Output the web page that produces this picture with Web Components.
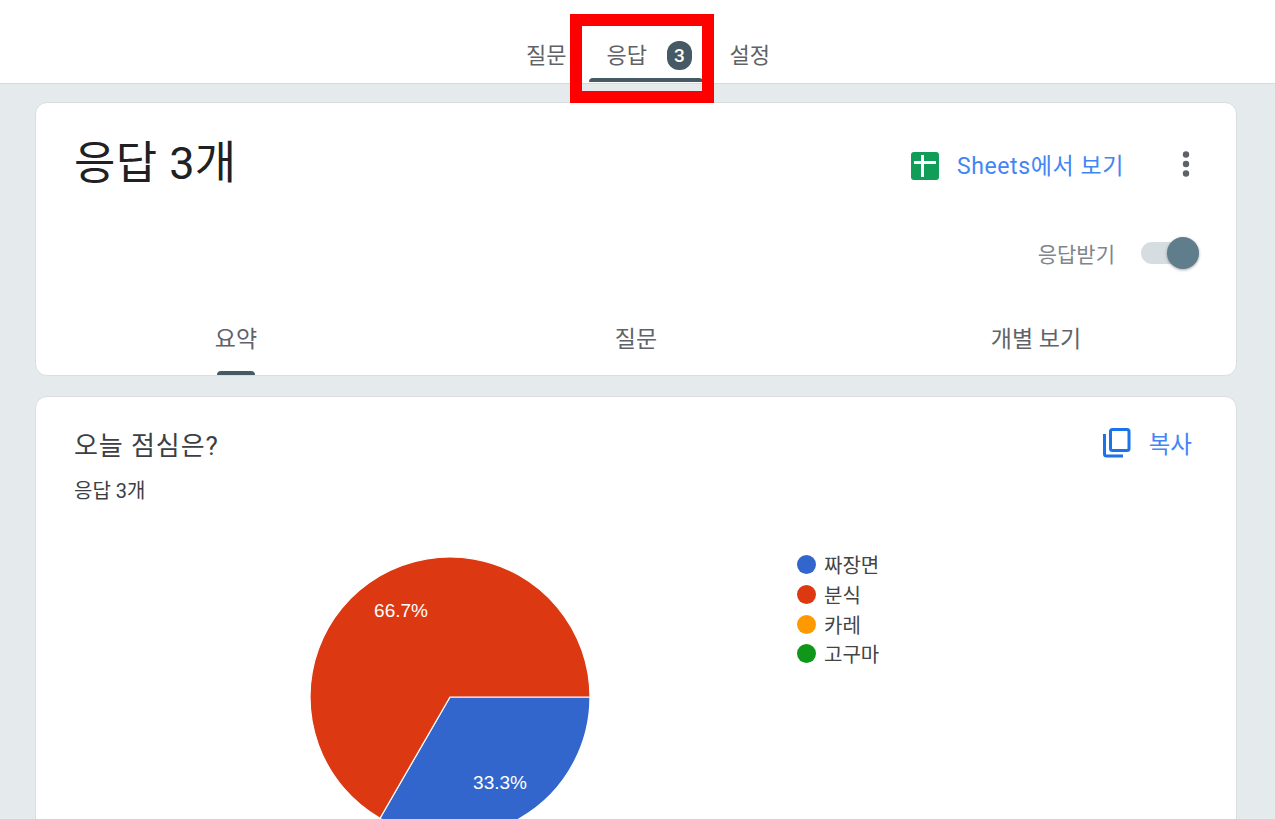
<!DOCTYPE html>
<html lang="ko">
<head>
<meta charset="utf-8">
<title>응답</title>
<style>
html, body { margin: 0; height: 100%; overflow: hidden; }
body {
    background: #e5eaed;
    font-family: Roboto, "Noto Sans CJK KR", sans-serif;
}
</style>
</head>
<body>
<top-bar></top-bar>
<page-body>
    <summary-card></summary-card>
    <question-card title-text="오늘 점심은?" count-text="응답 3개"></question-card>
</page-body>

<script>
class TopTab extends HTMLElement {
    constructor() {
        super();
        this.attachShadow({ mode: "open" });
        this.shadowRoot.innerHTML = `
<style>
:host{
    display: flex;
    align-items: center;
    flex: none;
    position: relative;
    height: 83px;
    box-sizing: border-box;
    padding-top: 22px;
    color: #5f6368;
    font-size: 22px;
}
:host([active]){
    width: 114px;
    padding-left: 17px;
    gap: 20px;
}
:host([active])::after{
    content: "";
    position: absolute;
    left: 0;
    right: 0;
    bottom: 1px;
    height: 4px;
    border-radius: 4px 4px 0 0;
    background: #455a64;
}
</style>
<slot></slot>`;
    }
}

class CountBadge extends HTMLElement {
    constructor() {
        super();
        this.attachShadow({ mode: "open" });
        this.shadowRoot.innerHTML = `
<style>
:host{
    display: flex;
    align-items: center;
    justify-content: center;
    width: 25px;
    height: 29px;
    margin-top: 6px;
    border-radius: 12px;
    background: #455a64;
    color: #fff;
    font-size: 19px;
    font-weight: 500;
}
</style>
<slot></slot>`;
    }
}

class TopBar extends HTMLElement {
    constructor() {
        super();
        this.attachShadow({ mode: "open" });
        this.shadowRoot.innerHTML = `
<style>
:host{
    display: flex;
    position: relative;
    height: 84px;
    box-sizing: border-box;
    padding-left: 526px;
    background: #fff;
    border-bottom: 1px solid #d6dadd;
}
top-tab:nth-of-type(1){ margin-right: 23px; }
top-tab:nth-of-type(3){ margin-left: 26px; }
.mark{
    position: absolute;
    left: 570px;
    top: 14px;
    width: 144px;
    height: 89px;
    box-sizing: border-box;
    border: 12px solid #ff0000;
    z-index: 5;
}
</style>
<top-tab>질문</top-tab>
<top-tab active><span>응답</span><count-badge>3</count-badge></top-tab>
<top-tab>설정</top-tab>
<div class="mark"></div>`;
    }
}

class PageBody extends HTMLElement {
    constructor() {
        super();
        this.attachShadow({ mode: "open" });
        this.shadowRoot.innerHTML = `
<style>
:host{
    display: flex;
    flex-direction: column;
    gap: 20px;
    width: 1202px;
    margin-left: 35px;
    padding-top: 18px;
}
</style>
<slot></slot>`;
    }
}

class SwitchToggle extends HTMLElement {
    constructor() {
        super();
        this.attachShadow({ mode: "open" });
        this.shadowRoot.innerHTML = `
<style>
:host{
    display: block;
    position: relative;
    width: 58px;
    height: 32px;
}
.track{
    position: absolute;
    left: 0;
    right: 3px;
    top: 5px;
    height: 22px;
    border-radius: 11px;
    background: #d5dde1;
}
.thumb{
    position: absolute;
    right: 0;
    top: 0;
    width: 32px;
    height: 32px;
    border-radius: 50%;
    background: #607d8b;
    box-shadow: 0 1px 3px rgba(0,0,0,.35);
}
</style>
<div class="track"></div>
<div class="thumb"></div>`;
    }
}

class SummaryTab extends HTMLElement {
    constructor() {
        super();
        this.attachShadow({ mode: "open" });
        this.shadowRoot.innerHTML = `
<style>
:host{
    display: flex;
    justify-content: center;
    position: relative;
    height: 73px;
    color: #5f6368;
    font-size: 23px;
    line-height: 73px;
}
:host([active])::after{
    content: "";
    position: absolute;
    left: 50%;
    bottom: 0;
    width: 38px;
    margin-left: -19px;
    height: 5px;
    border-radius: 4px 4px 0 0;
    background: #455a64;
}
</style>
<slot></slot>`;
    }
}

class SummaryCard extends HTMLElement {
    constructor() {
        super();
        this.attachShadow({ mode: "open" });
        this.shadowRoot.innerHTML = `
<style>
:host{
    display: block;
    height: 274px;
    box-sizing: border-box;
    background: #fff;
    border: 1px solid #dadce0;
    border-radius: 12px;
    overflow: hidden;
}
.head{
    display: flex;
    align-items: center;
    height: 120px;
    padding: 0 38px;
}
h1{
    flex: 1;
    margin: 2px 0 0;
    font-size: 45px;
    letter-spacing: .4px;
    font-weight: 400;
    color: #202124;
    line-height: 116px;
}
.sheets{
    display: flex;
    align-items: center;
    gap: 18px;
    margin-top: 5px;
    color: #4285f4;
    font-size: 23px;
    letter-spacing: .6px;
}
.sheets span{ margin-bottom: 4px; }
.more{
    margin: 2px 8px 0 58px;
    display: block;
}
.accept{
    display: flex;
    align-items: center;
    justify-content: flex-end;
    gap: 26px;
    height: 32px;
    padding-right: 37px;
    margin-top: 14px;
    color: #80868b;
    font-size: 21px;
}
.tabs{
    display: grid;
    grid-template-columns: repeat(3, 1fr);
    margin-top: 34px;
}
</style>
<div class="head">
    <h1>응답 3개</h1>
    <div class="sheets">
        <svg width="28" height="28" viewBox="0 0 28 28">
            <rect width="28" height="28" rx="3" fill="#0f9d58"/>
            <path d="M3 9h7V3h3v6h12v3H13v13h-3V12H3z" fill="#fff"/>
        </svg>
        <span>Sheets에서 보기</span>
    </div>
    <svg class="more" width="8" height="26" viewBox="0 0 8 26">
        <circle cx="4" cy="3.5" r="3.2" fill="#5f6368"/>
        <circle cx="4" cy="13" r="3.2" fill="#5f6368"/>
        <circle cx="4" cy="22.5" r="3.2" fill="#5f6368"/>
    </svg>
</div>
<div class="accept"><span>응답받기</span><switch-toggle></switch-toggle></div>
<div class="tabs">
    <summary-tab active>요약</summary-tab>
    <summary-tab>질문</summary-tab>
    <summary-tab>개별 보기</summary-tab>
</div>`;
    }
}

class PieChart extends HTMLElement {
    constructor() {
        super();
        this.attachShadow({ mode: "open" });
        this.shadowRoot.innerHTML = `
<style>
:host{ display: block; width: 284px; height: 284px; }
svg{ display: block; }
text{ fill: #fff; font-family: "Liberation Sans", Arial, sans-serif; font-size: 19px; text-anchor: middle; }
</style>
<svg width="284" height="284" viewBox="-142 -142 284 284">
    <path d="M0 0L140 0A140 140 0 0 1 -70 121.24Z" fill="#3366cc" stroke="#fff" stroke-width="1.2"/>
    <path d="M0 0L-70 121.24A140 140 0 1 1 140 0Z" fill="#dc3912" stroke="#fff" stroke-width="1.2"/>
    <text x="-49" y="-80">66.7%</text>
    <text x="50" y="92">33.3%</text>
</svg>`;
    }
}

class LegendItem extends HTMLElement {
    constructor() {
        super();
        this.attachShadow({ mode: "open" });
        this.shadowRoot.innerHTML = `
<style>
:host{
    display: flex;
    align-items: center;
    gap: 8px;
    height: 29.7px;
    color: #444;
    font-size: 20px;
}
i{
    width: 19px;
    height: 19px;
    border-radius: 50%;
    background: var(--dot);
}
</style>
<i></i><slot></slot>`;
    }
}

class QuestionCard extends HTMLElement {
    constructor() {
        super();
        this.attachShadow({ mode: "open" });
        this.shadowRoot.innerHTML = `
<style>
:host{
    display: block;
    height: 600px;
    box-sizing: border-box;
    background: #fff;
    border: 1px solid #dadce0;
    border-radius: 12px;
    padding: 28px 44px 0 38px;
}
.head{
    display: flex;
    align-items: center;
    height: 36px;
}
h2{
    flex: 1;
    margin: 0;
    font-size: 26px;
    letter-spacing: .9px;
    font-weight: 400;
    color: #3c4043;
}
.copy{
    display: flex;
    align-items: center;
    gap: 18px;
    color: #4285f4;
    font-size: 23.5px;
}
.count{
    margin-top: 16px;
    height: 28px;
    line-height: 28px;
    font-size: 20px;
    color: #3c4043;
}
.chart{
    display: flex;
    align-items: flex-start;
    margin-top: 50px;
    padding-left: 234px;
}
.legend{
    margin: -5px 0 0 205px;
}
</style>
<div class="head">
    <h2 id="title"></h2>
    <div class="copy">
        <svg width="28" height="30" viewBox="0 0 28 30" fill="none" stroke="#1a73e8" stroke-width="3">
            <rect x="7.5" y="1.5" width="18.5" height="21" rx="2"/>
            <path d="M1.5 6v20a2 2 0 0 0 2 2H20"/>
        </svg>
        <span>복사</span>
    </div>
</div>
<div class="count" id="count"></div>
<div class="chart">
    <pie-chart></pie-chart>
    <div class="legend">
        <legend-item style="--dot:#3366cc">짜장면</legend-item>
        <legend-item style="--dot:#dc3912">분식</legend-item>
        <legend-item style="--dot:#ff9900">카레</legend-item>
        <legend-item style="--dot:#109618">고구마</legend-item>
    </div>
</div>`;
    }

    connectedCallback() {
        this.shadowRoot.querySelector("#title").textContent = this.getAttribute("title-text");
        this.shadowRoot.querySelector("#count").textContent = this.getAttribute("count-text");
    }
}

customElements.define("count-badge", CountBadge);
customElements.define("top-tab", TopTab);
customElements.define("top-bar", TopBar);
customElements.define("page-body", PageBody);
customElements.define("switch-toggle", SwitchToggle);
customElements.define("summary-tab", SummaryTab);
customElements.define("summary-card", SummaryCard);
customElements.define("pie-chart", PieChart);
customElements.define("legend-item", LegendItem);
customElements.define("question-card", QuestionCard);
</script>
</body>
</html>
